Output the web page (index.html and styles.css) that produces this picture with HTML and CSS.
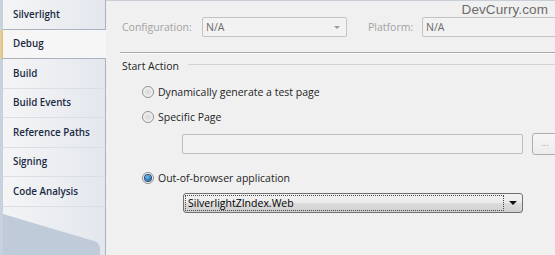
FILE: index.html
```html
<!DOCTYPE html>
<html lang="en">
<head>
  <meta charset="UTF-8" />
  <title>Silverlight Project Properties - Debug</title>
  <link rel="stylesheet" href="styles.css">
</head>
<body>
  <aside class="tabs">
    <div class="tab before-active">Silverlight</div>
    <div class="tab active">Debug</div>
    <div class="tab">Build</div>
    <div class="tab">Build Events</div>
    <div class="tab">Reference Paths</div>
    <div class="tab">Signing</div>
    <div class="tab">Code Analysis</div>
    <div class="tab-tail">
      <svg width="102" height="50" viewBox="0 0 102 50">
        <path d="M0 7 L91 34 Q97 36 97 42 L97 50 L0 50 Z" fill="#bfcbd9" />
      </svg>
    </div>
  </aside>

  <main class="content">
    <div class="watermark">DevCurry.com</div>

    <div class="config-row">
      <span class="field-label config-label">Configuration:</span>
      <div class="combo disabled config-combo">
        <span class="combo-text">N/A</span>
        <span class="combo-arrow small"></span>
      </div>
      <span class="field-label platform-label">Platform:</span>
      <div class="combo disabled platform-combo">
        <span class="combo-text">N/A</span>
      </div>
    </div>

    <hr class="separator" />

    <div class="group-head">
      <span>Start Action</span>
      <span class="group-line"></span>
    </div>

    <div class="options">
      <label class="radio-row first">
        <span class="radio"></span>
        <span>Dynamically generate a test page</span>
      </label>
      <label class="radio-row second">
        <span class="radio"></span>
        <span>Specific Page</span>
      </label>
      <div class="page-row">
        <div class="textbox"></div>
        <button class="browse-btn">...</button>
      </div>
      <label class="radio-row third">
        <span class="radio checked"></span>
        <span>Out-of-browser application</span>
      </label>
      <div class="combo app-combo">
        <span class="focus-box">SilverlightZIndex.Web</span>
        <span class="combo-arrow"></span>
      </div>
    </div>
  </main>
</body>
</html>
```

FILE: styles.css
```css
/* Base */
* {
  box-sizing: border-box;
}
body {
  margin: 0;
  width: 555px;
  height: 255px;
  overflow: hidden;
  display: flex;
  font-family: 'Open Sans', 'Noto Sans', sans-serif;
  font-size: 10.5px;
  color: #1e1e1e;
  background: #f0f0f0;
}

/* Left tab strip */
.tabs {
  width: 106px;
  flex: none;
  display: flex;
  flex-direction: column;
  padding-left: 3px;
  background: #c8d2de;
}
.tab {
  height: 29.5px;
  flex: none;
  display: flex;
  align-items: center;
  padding-left: 10px;
  color: #1b2a44;
  font-weight: 600;
  font-size: 9.8px;
  background: linear-gradient(90deg, #f5f5f6, #e3e7ed);
  border-bottom: 1px solid #dadfe6;
  border-right: 1px solid #a8b3c2;
}
.tab.before-active {
  border-bottom-color: #a8b3c2;
}
.tab.active {
  margin-left: -2px;
  padding-left: 10px;
  background: #f6f6f6;
  border-left: 2px solid #f3c35f;
  border-right: none;
  border-bottom-color: #a8b3c2;
}
.tab-tail {
  flex: 1;
  background: linear-gradient(90deg, #f2f3f5, #e3e7ed);
  border-right: 1px solid #a8b3c2;
}
.tab-tail svg {
  display: block;
}

/* Content panel */
.content {
  flex: 1;
  min-width: 0;
  overflow: hidden;
  position: relative;
  padding: 16px 0 0 16px;
  border-top: 1px solid #c9ced6;
  white-space: nowrap;
}
.watermark {
  position: absolute;
  top: 1px;
  right: 7px;
  font-family: 'Liberation Sans', Arial, sans-serif;
  font-size: 13.5px;
  color: #6b6b6b;
  letter-spacing: 0.1px;
}

.config-row {
  display: flex;
  align-items: center;
}
.field-label {
  color: #a2a2a2;
}
.config-label {
  width: 80px;
  flex: none;
}
.platform-label {
  width: 54px;
  flex: none;
  margin-left: 21px;
}

/* Combo boxes */
.combo {
  height: 20px;
  display: flex;
  align-items: center;
  border-radius: 2px;
  position: relative;
}
.combo.disabled {
  border: 1px solid #c3c3c3;
  background: #f2f2f2;
  color: #6a6a6a;
}
.combo-text {
  flex: 1;
  padding-left: 3px;
}
.config-combo {
  width: 145px;
  flex: none;
}
.platform-combo {
  width: 160px;
  flex: none;
}
.combo-arrow {
  width: 18px;
  height: 100%;
  display: flex;
  align-items: center;
  justify-content: center;
}
.combo-arrow::after {
  content: "";
  border-left: 4px solid transparent;
  border-right: 4px solid transparent;
  border-top: 4px solid #111;
}
.combo-arrow.small::after {
  border-left-width: 3px;
  border-right-width: 3px;
  border-top: 3px solid #9a9a9a;
}

.separator {
  margin: 15px 0 0 -2px;
  height: 2px;
  border: none;
  border-top: 1px solid #a9a9a9;
  border-bottom: 1px solid #fbfbfb;
}

/* Start Action group */
.group-head {
  display: flex;
  align-items: center;
  height: 16px;
  margin-top: 4px;
  color: #1e1e1e;
}
.group-line {
  flex: 1;
  height: 1px;
  margin: -3px 0 0 9px;
  background: #d3d3d3;
}

.options {
  padding-left: 20px;
}
.radio-row {
  display: flex;
  align-items: center;
  gap: 4px;
  height: 16px;
  color: #1e1e1e;
}
.radio-row.first {
  margin-top: 10px;
}
.radio-row.second {
  margin-top: 9px;
}
.radio-row.third {
  margin-top: 15px;
}
.radio {
  width: 12px;
  height: 12px;
  border-radius: 50%;
  border: 1px solid #8e8f8f;
  background: radial-gradient(circle at 50% 50%, #d8d8d8 0, #e6e6e6 45%, #f7f7f7 70%);
  display: flex;
  align-items: center;
  justify-content: center;
}
.radio.checked::after {
  content: "";
  width: 6px;
  height: 6px;
  border-radius: 50%;
  background: radial-gradient(circle at 40% 35%, #7ec2f0 0, #2a7cc4 55%, #124d85 100%);
  box-shadow: 0 0 0 1px #2a4f6e;
}

.page-row {
  display: flex;
  align-items: center;
  margin: 8px 0 0 40px;
}
.textbox {
  width: 341px;
  height: 20px;
  flex: none;
  border: 1px solid #bdbdbd;
  border-radius: 2px;
  background: #f2f2f2;
}
.browse-btn {
  width: 26px;
  height: 22px;
  margin-left: 9px;
  flex: none;
  padding: 0 0 3px;
  border: 1px solid #adadad;
  border-radius: 3px;
  background: linear-gradient(#f6f6f6, #ececec);
  color: #a6a6a6;
  font-family: inherit;
  font-size: 9px;
}

.app-combo {
  width: 340px;
  margin: 7px 0 0 41px;
  border: 1px solid #707070;
  border-radius: 3px;
  background: linear-gradient(#f2f2f2 0, #ebebeb 50%, #dddddd 50%, #d0d0d0 100%);
  padding-left: 1px;
}
.focus-box {
  flex: 1;
  height: 16px;
  line-height: 14px;
  padding-left: 2px;
  border: 1px dotted #4a4a4a;
  color: #000;
}
```
